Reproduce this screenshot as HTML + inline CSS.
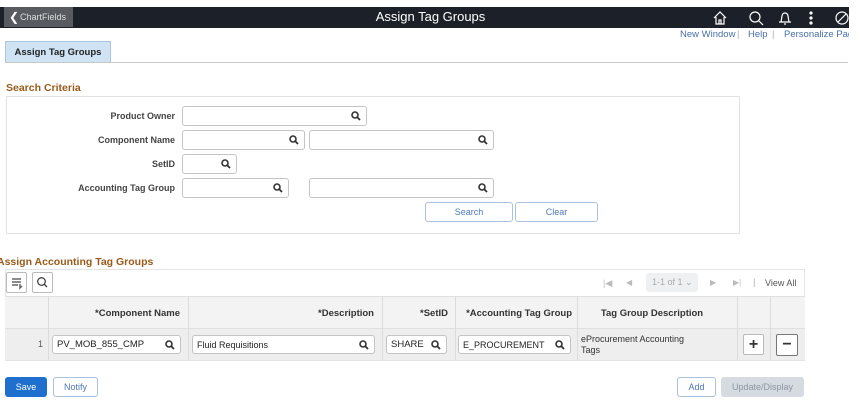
<!DOCTYPE html>
<html><head><style>
*{box-sizing:border-box;margin:0;padding:0}
body{width:861px;height:420px;background:#fff;font-family:"Liberation Sans",Arial,sans-serif;position:relative;overflow:hidden;color:#333}
.a{position:absolute}
.bar{left:0;top:7px;width:849px;height:21px;background:#1c2129}
.back{left:4px;top:7px;width:69px;height:20px;background:#585c61;color:#ddd;font-size:9px;line-height:20px;padding-left:16px}
.title{left:0;width:861px;top:9px;text-align:center;color:#fff;font-size:13px}
.lnk{color:#4a6fa8;font-size:9.5px;top:29px}
.tab{left:5px;top:41px;width:106px;height:22px;background:#cfe3f5;border:1px solid #a9c6e2;border-bottom:none;font-size:9.5px;font-weight:bold;line-height:22px;text-align:center;color:#222}
.hl{left:5px;top:62px;width:843px;height:1px;background:#c8c8c8}
.sec{color:#9b5a1a;font-size:10.5px;font-weight:bold}
.box{left:6px;top:96px;width:734px;height:138px;border:1px solid #e2e2e2}
.lbl{font-size:9px;font-weight:bold;color:#444;text-align:right;width:170px;left:5px}
.in{height:20px;border:1px solid #c4c4c4;border-radius:3px;background:#fff;font-size:9.5px;line-height:18px;padding-left:4px;color:#222;white-space:nowrap;overflow:hidden}
.in svg{position:absolute;right:5px;top:4px}
.btn{height:20px;border:1px solid #a9c0de;border-radius:3px;background:#fff;color:#4d78b8;font-size:9px;text-align:center;line-height:18px}
.grid{left:5px;top:269px;width:800px;height:92px;border:1px solid #e4e4e4}
.hdr{left:5px;top:296px;width:800px;height:33px;background:#f3f3f3;border-top:1px solid #e0e0e0;border-bottom:1px solid #e0e0e0}
.row{left:5px;top:329px;width:800px;height:31px;background:#eeeeee}
.vl{width:1px;background:#dcdcdc;top:296px;height:64px}
.th{font-size:9.5px;font-weight:bold;color:#333;top:308px;text-align:right}
.ib{border:1px solid #bbb;border-radius:2px;background:#fff}
</style></head><body>
<div class="a bar"></div>
<div class="a back"><span style="position:absolute;left:5px;top:0;font-size:12px;color:#fff">&#10094;</span>ChartFields</div>
<div class="a title">Assign Tag Groups</div>
<svg class="a" style="left:711px;top:10px" width="140" height="16" viewBox="0 0 140 16" fill="none" stroke="#fff" stroke-width="1.2">
<path d="M3 8 L9 2 L15 8 M5 7 V14 H13 V7 M8 14 V10 H10 V14"/>
<circle cx="44" cy="7" r="5"/><path d="M48 11 L52 15"/>
<path d="M68 12 H80 M70 12 C71 9 70 3 74 3 C78 3 77 9 78 12 M73 14 H75"/>
<circle cx="100" cy="3" r="1" fill="#fff"/><circle cx="100" cy="8" r="1" fill="#fff"/><circle cx="100" cy="13" r="1" fill="#fff"/>
<circle cx="131" cy="8" r="6"/><path d="M127 12 L135 4"/>
</svg>
<div class="a lnk" style="left:680px">New Window</div>
<div class="a lnk" style="left:737px;color:#aaa">|</div>
<div class="a lnk" style="left:748px">Help</div>
<div class="a lnk" style="left:772px;color:#aaa">|</div>
<div class="a lnk" style="left:784px;width:65px;overflow:hidden;white-space:nowrap">Personalize Page</div>
<div class="a tab">Assign Tag Groups</div>
<div class="a hl"></div>
<div class="a sec" style="left:6px;top:82px">Search Criteria</div>
<div class="a box"></div>
<svg width="0" height="0" style="position:absolute"><defs><g id="m"><circle cx="4" cy="4" r="3" stroke="#333" stroke-width="1.6" fill="none"/><path d="M6.3 6.3 L9 9" stroke="#333" stroke-width="1.8"/></g></defs></svg>
<div class="a lbl" style="top:111px">Product Owner</div>
<div class="a in" style="left:182px;top:106px;width:185px"><svg width="10" height="10"><use href="#m"/></svg></div>
<div class="a lbl" style="top:135px">Component Name</div>
<div class="a in" style="left:182px;top:130px;width:123px"><svg width="10" height="10"><use href="#m"/></svg></div>
<div class="a in" style="left:309px;top:130px;width:185px"><svg width="10" height="10"><use href="#m"/></svg></div>
<div class="a lbl" style="top:159px">SetID</div>
<div class="a in" style="left:182px;top:154px;width:55px"><svg width="10" height="10"><use href="#m"/></svg></div>
<div class="a lbl" style="top:183px">Accounting Tag Group</div>
<div class="a in" style="left:182px;top:178px;width:107px"><svg width="10" height="10"><use href="#m"/></svg></div>
<div class="a in" style="left:309px;top:178px;width:185px"><svg width="10" height="10"><use href="#m"/></svg></div>
<div class="a btn" style="left:425px;top:202px;width:88px">Search</div>
<div class="a btn" style="left:515px;top:202px;width:83px">Clear</div>
<div class="a sec" style="left:-3px;top:256px">Assign Accounting Tag Groups</div>
<div class="a grid"></div>
<div class="a ib" style="left:6px;top:272px;width:21px;height:21px"><svg width="19" height="19"><path d="M5 6H14M5 9H14M5 12H11M13 11L13 15L15 13" stroke="#666" stroke-width="1.5" fill="none"/></svg></div>
<div class="a ib" style="left:32px;top:272px;width:21px;height:21px"><svg width="19" height="19"><circle cx="8.5" cy="8.5" r="3.8" stroke="#444" stroke-width="1.3" fill="none"/><path d="M11.3 11.3L14 14" stroke="#444" stroke-width="1.4"/></svg></div>
<div class="a" style="left:603px;top:278px;font-size:9px;color:#bbb">|&#9664;</div>
<div class="a" style="left:626px;top:278px;font-size:8px;color:#bbb">&#9664;</div>
<div class="a" style="left:646px;top:273px;width:52px;height:19px;background:#eef0f2;border-radius:3px;color:#aaa;font-size:9px;line-height:19px;padding-left:6px">1-1 of 1 &#8964;</div>
<div class="a" style="left:710px;top:278px;font-size:8px;color:#bbb">&#9654;</div>
<div class="a" style="left:733px;top:278px;font-size:8px;color:#bbb">&#9654;|</div>
<div class="a" style="left:753px;top:277px;font-size:9.5px;color:#aaa">|</div>
<div class="a" style="left:765px;top:278px;font-size:9px;color:#555">View All</div>
<div class="a hdr"></div>
<div class="a row"></div>
<div class="a vl" style="left:48px"></div><div class="a vl" style="left:188px"></div><div class="a vl" style="left:382px"></div><div class="a vl" style="left:455px"></div><div class="a vl" style="left:577px"></div><div class="a vl" style="left:737px"></div><div class="a vl" style="left:770px"></div>
<div class="a th" style="left:48px;width:132px">*Component Name</div>
<div class="a th" style="left:188px;width:186px">*Description</div>
<div class="a th" style="left:382px;width:66px">*SetID</div>
<div class="a th" style="left:455px;width:117px">*Accounting Tag Group</div>
<div class="a th" style="left:577px;width:150px;text-align:center">Tag Group Description</div>
<div class="a" style="left:38px;top:339px;font-size:9px;color:#555">1</div>
<div class="a in" style="left:52px;top:335px;width:129px;height:19px;font-size:9.5px"><svg width="10" height="10"><use href="#m"/></svg>PV_MOB_855_CMP</div>
<div class="a in" style="left:192px;top:335px;width:183px;height:19px;font-size:9px"><svg width="10" height="10"><use href="#m"/></svg>Fluid Requisitions</div>
<div class="a in" style="left:386px;top:335px;width:61px;height:19px;font-size:9.5px"><svg width="10" height="10"><use href="#m"/></svg>SHARE</div>
<div class="a in" style="left:458px;top:335px;width:113px;height:19px;font-size:9px"><svg width="10" height="10"><use href="#m"/></svg>E_PROCUREMENT</div>
<div class="a" style="left:581px;top:334px;font-size:9px;color:#333;line-height:11px">eProcurement Accounting<br>Tags</div>
<div class="a ib" style="left:743px;top:334px;width:21px;height:21px;font-size:16px;font-weight:bold;text-align:center;line-height:19px;color:#333">+</div>
<div class="a ib" style="left:776px;top:334px;width:22px;height:22px;border-color:#777;font-size:16px;font-weight:bold;text-align:center;line-height:19px;color:#333">&#8722;</div>
<div class="a" style="left:5px;top:377px;width:42px;height:20px;background:#1f6fce;border-radius:3px;color:#fff;font-size:9px;text-align:center;line-height:20px">Save</div>
<div class="a btn" style="left:53px;top:377px;width:45px">Notify</div>
<div class="a btn" style="left:677px;top:377px;width:39px">Add</div>
<div class="a" style="left:721px;top:377px;width:83px;height:20px;background:#d6dbe1;border-radius:3px;color:#8d96a3;font-size:9px;text-align:center;line-height:20px">Update/Display</div>
</body></html>
